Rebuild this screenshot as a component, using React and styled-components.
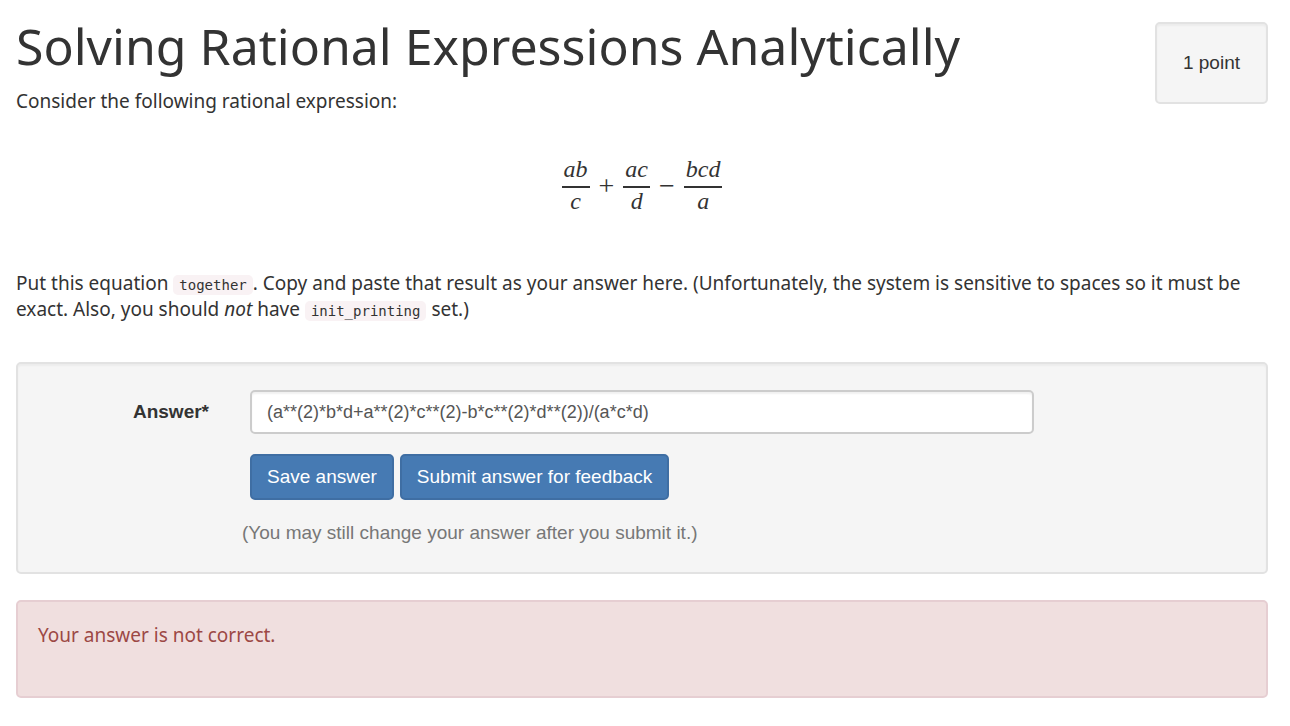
import React, { useState } from 'react';
import styled, { createGlobalStyle } from 'styled-components';

export default function App() {
  const [answer, setAnswer] = useState(
    '(a**(2)*b*d+a**(2)*c**(2)-b*c**(2)*d**(2))/(a*c*d)'
  );

  const handleChange = (e) => {
    setAnswer(e.target.value);
  };

  const handleSubmit = (e) => {
    e.preventDefault();
  };

  return (
    <Page>
      <GlobalStyle />
      <Header>
        <Title>Solving Rational Expressions Analytically</Title>
        <Points>1 point</Points>
      </Header>
      <Text>Consider the following rational expression:</Text>
      <Equation>
        <Fraction top="ab" bottom="c" />
        <Operator>+</Operator>
        <Fraction top="ac" bottom="d" />
        <Operator>−</Operator>
        <Fraction top="bcd" bottom="a" />
      </Equation>
      <Text>
        Put this equation <Code>together</Code>. Copy and paste that result as
        your answer here. (Unfortunately, the system is sensitive to spaces so
        it must be exact. Also, you should <em>not</em> have{' '}
        <Code>init_printing</Code> set.)
      </Text>
      <Form onSubmit={handleSubmit}>
        <Label htmlFor="answer">Answer*</Label>
        <Fields>
          <Input id="answer" type="text" value={answer} onChange={handleChange} />
          <Buttons>
            <Button type="submit">Save answer</Button>
            <Button type="submit">Submit answer for feedback</Button>
          </Buttons>
          <Hint>(You may still change your answer after you submit it.)</Hint>
        </Fields>
      </Form>
      <Alert role="alert">Your answer is not correct.</Alert>
    </Page>
  );
}

function Fraction({ top, bottom }) {
  return (
    <FractionWrapper>
      <Numerator>{top}</Numerator>
      <Denominator>{bottom}</Denominator>
    </FractionWrapper>
  );
}

const GlobalStyle = createGlobalStyle`
  * {
    box-sizing: border-box;
  }

  body {
    margin: 0;
    background: #fff;
    color: #333;
    font-family: 'Noto Sans', sans-serif;
    font-size: 19px;
    line-height: 26px;
  }
`;

const Page = styled.main`
  padding: 16px 22px 28px 16px;
`;

const Header = styled.header`
  display: flex;
  justify-content: space-between;
  align-items: flex-start;
  height: 72px;
`;

const Title = styled.h1`
  margin: 0;
  font-size: 50px;
  font-weight: 400;
  line-height: 60px;
`;

const Well = styled.div`
  background: #f5f5f5;
  border: 2px solid #e2e2e2;
  border-radius: 5px;
  box-shadow: inset 0 2px 2px rgba(0, 0, 0, 0.04);
  font-family: 'Liberation Sans', Arial, sans-serif;
`;

const Points = styled(Well)`
  flex-shrink: 0;
  margin-top: 6px;
  padding: 26px;
`;

const Text = styled.p`
  margin: 0;
`;

const Equation = styled.div`
  display: flex;
  justify-content: center;
  align-items: center;
  padding: 42px 0 55px;
  font-family: 'Liberation Serif', serif;
  font-size: 24px;
`;

const FractionWrapper = styled.span`
  display: flex;
  flex-direction: column;
  align-items: stretch;
  text-align: center;
  font-style: italic;
`;

const Numerator = styled.span`
  padding: 0 2px 4px;
  line-height: 26px;
`;

const Denominator = styled.span`
  border-top: 2px solid #333;
  padding: 0 2px;
  line-height: 27px;
`;

const Operator = styled.span`
  padding: 0 9px;
  font-size: 28px;
`;

const Code = styled.code`
  padding: 2px 6px;
  background: #f9f2f4;
  border-radius: 5px;
  font-family: 'DejaVu Sans Mono', monospace;
  font-size: 14px;
  line-height: 16px;
`;

const Form = styled(Well).attrs({ as: 'form' })`
  display: grid;
  grid-template-columns: 2fr 8fr 2fr;
  column-gap: 36px;
  margin-top: 40px;
  padding: 26px 0;
`;

const Label = styled.label`
  padding: 9px 5px 0 0;
  font-weight: 700;
  text-align: right;
`;

const Fields = styled.div`
  display: flex;
  flex-direction: column;
  gap: 20px;
`;

const Input = styled.input`
  width: 100%;
  height: 44px;
  padding: 0 15px;
  background: #fff;
  border: 2px solid #ccc;
  border-radius: 5px;
  box-shadow: inset 0 2px 2px rgba(0, 0, 0, 0.06);
  color: #555;
  font: inherit;
  font-size: 18px;
`;

const Buttons = styled.div`
  display: flex;
  gap: 6px;
`;

const Button = styled.button`
  height: 46px;
  padding: 0 15px;
  background: #467ab3;
  border: 2px solid #3f6ea3;
  border-radius: 5px;
  color: #fff;
  font: inherit;
  cursor: pointer;
`;

const Hint = styled.p`
  margin: 0 0 0 -8px;
  color: #777;
`;

const Alert = styled.div`
  min-height: 98px;
  margin-top: 26px;
  padding: 20px;
  background: #f0dfdf;
  border: 2px solid #e6ced2;
  border-radius: 5px;
  color: #9c4845;
`;
